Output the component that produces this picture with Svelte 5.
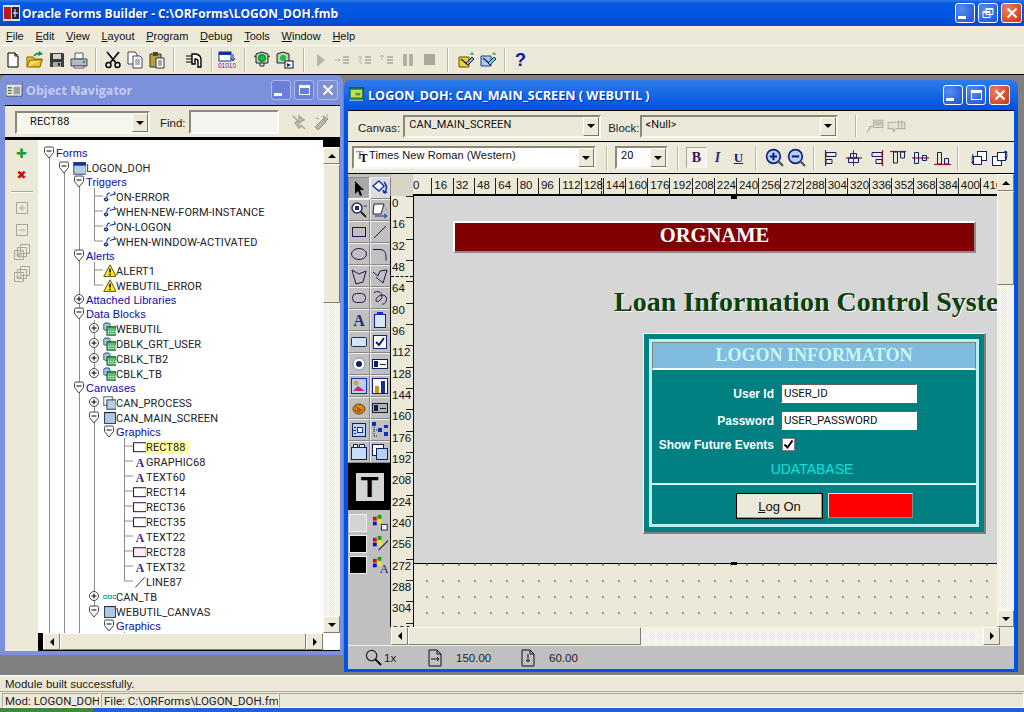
<script>
  const I = {
    new: '<path d="M4 2h7l3 3v11H4z" fill="#fff" stroke="#000"/><path d="M11 2v3h3" fill="none" stroke="#000"/>',
    open: '<path d="M1 6h6l1 2h8l-2 8H1z" fill="#e8c428" stroke="#806000"/><path d="M1 16l3-7h13" fill="#f4dc60" stroke="#806000"/><path d="M8 5q3-4 6-2" stroke="#109030" fill="none" stroke-width="1.6"/><path d="M13 0l4 3-5 2z" fill="#109030"/>',
    save: '<path d="M2 2h13l1 1v13H2z" fill="#3c3c3c"/><rect x="5" y="3" width="8" height="5" fill="#d0d0d0"/><rect x="5" y="11" width="8" height="5" fill="#a8a8a8"/><rect x="10" y="12" width="2" height="3" fill="#333"/>',
    print: '<path d="M5 2h8v6H5z" fill="#fff" stroke="#556"/><path d="M1 8h16v7H1z" fill="#b4b8c0" stroke="#445"/><path d="M4 15h10v2H4z" fill="#fff" stroke="#556"/><rect x="13" y="10" width="2" height="2" fill="#1a9a40"/>',
    cut: '<path d="M3 1l9 11M15 1L6 12" stroke="#000" stroke-width="1.6" fill="none"/><circle cx="4.5" cy="14" r="2.5" fill="none" stroke="#000" stroke-width="1.4"/><circle cx="13.5" cy="14" r="2.5" fill="none" stroke="#000" stroke-width="1.4"/>',
    copy: '<path d="M2 1h7l2 2v10H2z" fill="#fff" stroke="#445"/><path d="M7 5h7l2 2v10H7z" fill="#fff" stroke="#445"/><path d="M9 9h5M9 11h5M9 13h5" stroke="#667" fill="none"/>',
    paste: '<path d="M2 3h11v13H2z" fill="#b8a040" stroke="#333"/><rect x="5" y="1" width="5" height="4" fill="#444"/><path d="M8 7h8v10H8z" fill="#fff" stroke="#333"/><path d="M10 10h4M10 12h4M10 14h4" stroke="#555"/>',
    plug: '<path d="M1 5h6M1 8h6M1 11h6" stroke="#000" fill="none"/><path d="M7 3h4q5 1 5 6v7h-3v-6q0-2-3-2v5H7z" fill="#fff" stroke="#000" stroke-width="1.4"/>',
    gen: '<rect x="1" y="1" width="12" height="9" fill="#fff" stroke="#1030a0"/><rect x="1" y="1" width="12" height="3" fill="#1030a0"/><path d="M15 3v6M13 7l2 3 2-3" stroke="#1030a0" fill="none"/><text x="0" y="17" font-size="6.5" font-family="Liberation Sans" fill="#6018a0">01010</text>',
    run1: '<path d="M2 3l6-2 6 2v9H2z" fill="#b8d0b8" stroke="#223"/><circle cx="8" cy="7" r="3.4" fill="#18c040" stroke="#106020"/><path d="M0 5l2 1M16 5l-2 1M6 12v3h4v-3" stroke="#223" fill="none"/>',
    run2: '<path d="M1 3l6-2 6 2v9H1z" fill="#b8d0b8" stroke="#223"/><circle cx="7" cy="7" r="3" fill="#18c040"/><rect x="9" y="10" width="8" height="7" fill="#fff" stroke="#112"/><path d="M11 12l4 2-4 2z" fill="#102080"/>',
    play: '<path d="M4 3l8 6-8 7z" fill="#b4b4a8"/>',
    s1: '<path d="M1 9h5M4 7l2 2-2 2" stroke="#bcbcb0" fill="none"/><path d="M9 6h6M9 9h6M9 12h6" stroke="#a8a8a0" stroke-width="1.4"/>',
    s2: '<path d="M2 6h4q-2 0-2 3v3h2" stroke="#bcbcb0" fill="none"/><path d="M9 6h6M9 9h6M9 12h6" stroke="#a8a8a0" stroke-width="1.4"/>',
    s3: '<path d="M4 9V4M2 6l2-2 2 2" stroke="#bcbcb0" fill="none"/><path d="M9 6h6M9 9h6M9 12h6" stroke="#a8a8a0" stroke-width="1.4"/>',
    pause: '<path d="M4 3h4v12H4zM10 3h4v12h-4z" fill="#b0b0a4"/>',
    stop: '<path d="M3 3h11v11H3z" fill="#a8a89c"/>',
    wiz1: '<path d="M1 6h10v10H1z" fill="#f0d040" stroke="#605000"/><path d="M3 8l7 6" stroke="#222" stroke-width="1.4"/><path d="M8 12l6-6 2 2-6 6z" fill="#90a0e0" stroke="#223"/><path d="M14 1v3M12 3h4" stroke="#20b040"/>',
    wiz2: '<path d="M1 5h10v10H1z" fill="#a8c8f0" stroke="#204080"/><path d="M3 7l7 6" stroke="#224" stroke-width="1.4"/><path d="M8 12l6-6 2 2-6 6z" fill="#70d0f0" stroke="#223"/><path d="M14 1v3M12 3h4" stroke="#20b040"/>',
    nav: '<rect x="0" y="0" width="17" height="15" fill="#e8e8e0" stroke="#505060"/><rect x="0" y="0" width="17" height="3" fill="#8090c0"/><path d="M2 6h4M2 9h4M2 12h4" stroke="#508050" stroke-width="1.5"/><rect x="8" y="5" width="7" height="8" fill="#9aa0a8"/>',
    cv: '<rect x="0" y="1" width="15" height="12" fill="#2a8a50" stroke="#1a4020"/><rect x="2" y="3" width="12" height="8" fill="#c8e048"/><rect x="7" y="6" width="5" height="3" fill="#48a060"/><path d="M0 14h15" stroke="#80a0d0" stroke-width="2"/>',
    flash1: '<path d="M3 3l5 5-3 2 4 5 3-2 3 3M9 3l5 4-5 3z" stroke="#a8a89c" fill="#c0c0b4" stroke-width="1.5"/>',
    flash2: '<path d="M2 14l8-8 3 3-8 8zM10 3l5 3-3 3z" fill="#b8b8a8" stroke="#9a9a8c"/><path d="M14 1v3M3 5l3 1" stroke="#a8a89c"/>',
    hand1: '<path d="M2 15l3-6h3V3l9 0v7H8" stroke="#b0b0a8" fill="#dad8cc"/><path d="M9 5h7M9 7h7" stroke="#b0b0a8"/>',
    hand2: '<path d="M1 5h5l4 0 7 0v6H9l-3 3v-3H1z" stroke="#b0b0a8" fill="#e4e2d6"/><path d="M11 3v8M14 3v8" stroke="#b0b0a8"/>',
    zin: '<circle cx="8" cy="8" r="6.5" fill="#b8d0f0" stroke="#102080" stroke-width="1.6"/><path d="M4.500 8h7M8 4.500v7" stroke="#102080" stroke-width="2"/><path d="M12.500 12.500l4.500 4.500" stroke="#556" stroke-width="2.2"/>',
    zout: '<circle cx="8" cy="8" r="6.500" fill="#b8d0f0" stroke="#102080" stroke-width="1.6"/><path d="M4.500 8h7" stroke="#102080" stroke-width="2"/><path d="M12.500 12.500l4.500 4.500" stroke="#556" stroke-width="2.200"/>',
    a1: '<path d="M2.500 1v16" stroke="#b01020" stroke-width="1.200"/><path d="M3 3.500h10v4H3zM3 10.500h6v4H3z" fill="none" stroke="#102060"/>',
    a2: '<path d="M1 9h16" stroke="#b01020" stroke-width="1.200"/><path d="M5.500 4.500h6v4.500h-6zM3.500 9h10v4.500h-10z" fill="none" stroke="#102060"/><path d="M8.500 1v16" stroke="#b01020"/>',
    a3: '<path d="M15.500 1v16" stroke="#b01020" stroke-width="1.200"/><path d="M5 3.500h10v4H5zM9 10.500h6v4H9z" fill="none" stroke="#102060"/>',
    a4: '<path d="M1 2.500h16" stroke="#b01020" stroke-width="1.200"/><path d="M4.500 3v11h4V3zM11.500 3v6h4V3z" fill="none" stroke="#102060"/>',
    a5: '<path d="M1 9h17" stroke="#b01020" stroke-width="1.200"/><path d="M3.500 3.500h4v11h-4zM11.500 6.500h4v5h-4z" fill="none" stroke="#102060"/>',
    a6: '<path d="M1 15.500h17" stroke="#b01020" stroke-width="1.200"/><path d="M4.500 3.500h4V15h-4zM11.500 9.500h4V15h-4z" fill="none" stroke="#102060"/>',
    st1: '<rect x="7.500" y="2.500" width="9" height="9" fill="#fff" stroke="#102060"/><path d="M3 5q-2 5 0 10M3 15l-2-2M3 15l2-2" stroke="#1030a0" fill="none"/><rect x="3.500" y="7.500" width="8" height="8" fill="#fff" stroke="#102060"/>',
    st2: '<rect x="1.500" y="7.500" width="9" height="9" fill="#fff" stroke="#102060"/><rect x="6.500" y="3.500" width="8" height="8" fill="#fff" stroke="#102060"/><path d="M15 2q2 4 0 9M15 2l-2 1M15 2l1 2" stroke="#1030a0" fill="none"/>',
    arrow: '<path d="M5 2v13l3-3 2 5 2-1-2-5h4z" fill="#000"/>',
    rot: '<path d="M2 7l6-5 5 5-5 5z" fill="#fff" stroke="#1030b0" stroke-width="1.400"/><path d="M13 3q5 6 0 11M13 14l3-1M13 14l-1-3" stroke="#1030b0" fill="none" stroke-width="1.500"/>',
    mag: '<circle cx="7" cy="7" r="5" fill="#fff" stroke="#334" stroke-width="1.500"/><rect x="5" y="5" width="4" height="4" fill="#1030a0"/><path d="M11 11l5 5" stroke="#222" stroke-width="2"/><path d="M14 5h3" stroke="#334"/>',
    resh: '<path d="M3 3h10l-3 10H2z" fill="#fff" stroke="#223"/><path d="M13 3l3 7" stroke="#888" stroke-dasharray="1 1"/><path d="M4 15h12M13 13l3 2-3 2" stroke="#1030b0" fill="none"/>',
    rect: '<rect x="2.500" y="4.500" width="13" height="9" fill="none" stroke="#301050"/>',
    line: '<path d="M3 15L15 3" stroke="#301050"/>',
    ell: '<ellipse cx="9" cy="9" rx="7.500" ry="5.500" fill="none" stroke="#301050"/>',
    arc: '<path d="M2 4.500h7q6 0 6 7v4" fill="none" stroke="#301050"/>',
    poly: '<path d="M2 3l7 4 7-3-3 11-7 2z" fill="none" stroke="#301050"/>',
    pline: '<path d="M2 5l5 4 2-5 7-1-4 13-7-6" fill="none" stroke="#301050"/>',
    rrect: '<rect x="2.500" y="4.500" width="13" height="9" rx="4" fill="none" stroke="#301050"/>',
    free: '<path d="M3 4c3-3 8-1 8 3s-6 8-6 4 8-7 10-3-2 8-4 7" fill="none" stroke="#301050"/>',
    a: '<text x="9" y="15" text-anchor="middle" font-family="Liberation Serif" font-weight="700" font-size="16" fill="#203080">A</text>',
    blk: '<rect x="3.500" y="3.500" width="11" height="13" fill="#d8e8f8" stroke="#102080"/><rect x="6" y="1" width="6" height="3" fill="#1030c0"/>',
    btn: '<rect x="1.500" y="4.500" width="15" height="9" rx="1" fill="#d8e4f8" stroke="#223060"/>',
    chk: '<rect x="2.500" y="2.500" width="13" height="13" fill="#fff" stroke="#102080"/><path d="M5 9l3 3 5-7" fill="none" stroke="#102060" stroke-width="2"/>',
    radio: '<circle cx="9" cy="9" r="6" fill="#fff" stroke="#8090a0"/><circle cx="9" cy="9" r="3" fill="#102060"/>',
    txt: '<rect x="1.500" y="4.500" width="15" height="9" fill="#fff" stroke="#102060"/><rect x="3" y="6" width="4" height="6" fill="#102060"/><path d="M9 9.500h6" stroke="#102060"/>',
    img: '<rect x="1.500" y="1.500" width="15" height="15" fill="#b8d0f8" stroke="#1030a0"/><circle cx="6" cy="6" r="2.500" fill="#e0a020"/><path d="M3 14l5-5 7 5z" fill="#c03070"/>',
    chart: '<rect x="1.500" y="1.500" width="15" height="15" fill="#fff" stroke="#102080"/><rect x="4" y="9" width="4" height="7" fill="#d09020"/><rect x="10" y="4" width="4" height="12" fill="#1030a0"/>',
    ole: '<ellipse cx="9" cy="10" rx="6" ry="5" fill="#d08820" stroke="#804000"/><path d="M6 8l6 4M5 11l5 2" stroke="#703000"/>',
    disp: '<rect x="1.500" y="4.500" width="15" height="9" fill="#b0b0b0" stroke="#102040"/><rect x="3" y="6" width="4" height="6" fill="#102040"/><path d="M9 9.500h6" stroke="#102040"/>',
    stk: '<rect x="2.500" y="2.500" width="13" height="13" fill="#b8d4f0" stroke="#102060"/><rect x="7.500" y="6.500" width="5" height="5" fill="#fff" stroke="#1030a0"/><path d="M4 6.500h2M3 9.500h3M4 12.500h2" stroke="#1030a0"/>',
    tr: '<rect x="1" y="1" width="4" height="4" fill="#1030c0"/><rect x="7" y="7" width="4" height="4" fill="#1030c0"/><rect x="13" y="4" width="4" height="3" fill="#1030c0"/><rect x="13" y="11" width="4" height="4" fill="#1030c0"/><path d="M3 6v10M3 9h4M3 15h3" stroke="#223" stroke-dasharray="1 1"/>',
    tab: '<rect x="1.500" y="4.500" width="15" height="12" fill="#c8dcf4" stroke="#102060"/><path d="M3.500 1.500h4v3h-4zM9.500 1.500h5v3h-5z" fill="#fff" stroke="#102060"/>',
    can: '<rect x="1.500" y="1.500" width="11" height="11" fill="#fff" stroke="#102060"/><rect x="5.500" y="5.500" width="11" height="11" fill="#b8d0f0" stroke="#102060"/>',
    c1: '<rect x="1" y="3" width="4" height="4" fill="#d01010"/><rect x="6" y="1" width="4" height="4" fill="#10a010"/><rect x="1" y="8" width="4" height="4" fill="#1010d0"/><rect x="6" y="6" width="4" height="4" fill="#e8e820"/><rect x="10" y="11" width="6" height="6" fill="#fff" stroke="#301050"/>',
    c2: '<rect x="1" y="3" width="4" height="4" fill="#d01010"/><rect x="6" y="1" width="4" height="4" fill="#10a010"/><rect x="1" y="8" width="4" height="4" fill="#1010d0"/><rect x="6" y="6" width="5" height="5" fill="#e8e820"/><path d="M7 16L17 6" stroke="#301050" stroke-width="1.200"/>',
    c3: '<rect x="1" y="3" width="4" height="4" fill="#d01010"/><rect x="6" y="1" width="4" height="4" fill="#10a010"/><rect x="1" y="8" width="4" height="4" fill="#1010d0"/><rect x="6" y="6" width="4" height="4" fill="#e8e820"/><text x="13" y="18" text-anchor="middle" font-family="Liberation Serif" font-size="13" fill="#301070">A</text>',
    find: '<circle cx="7" cy="7" r="5.500" fill="none" stroke="#222" stroke-width="1.300"/><path d="M11 11l6 6" stroke="#111" stroke-width="2.200"/>',
    pr: '<path d="M3 1h8l4 4v12H3z" fill="none" stroke="#111"/><path d="M11 1v4h4" fill="none" stroke="#111"/><path d="M5 10h8M11 8l2 2-2 2" fill="none" stroke="#111"/>',
    pd: '<path d="M3 1h8l4 4v12H3z" fill="none" stroke="#111"/><path d="M11 1v4h4" fill="none" stroke="#111"/><path d="M9 5v8M7 11l2 2 2-2" fill="none" stroke="#111"/>',
    trig: '<circle cx="4" cy="12" r="2.800" fill="#1030a0"/><circle cx="4" cy="12" r="1" fill="#fff"/><path d="M5 9q0-5 4-5" stroke="#1030a0" fill="none" stroke-width="1.300"/><path d="M9 7q4-2 7-2M14 2l2 3-3 1" stroke="#1030a0" fill="none" stroke-width="1.300"/>',
    alert: '<path d="M9 1l8 15H1z" fill="#f8e818" stroke="#303000"/><path d="M9 6v5" stroke="#000" stroke-width="2"/><rect x="8" y="12.500" width="2" height="2"/>',
    dblk: '<ellipse cx="5" cy="3" rx="4" ry="2" fill="#78a8d0" stroke="#204070"/><path d="M1 3v7q4 2 8 0V3" fill="#a8c8e8" stroke="#204070"/><rect x="5" y="6" width="12" height="11" fill="#20a040" stroke="#105020"/><path d="M7 10v6M10 10v6M13 10v6M16 10v6M6 9h10M6 12h10M6 15h10" stroke="#fff" stroke-width=".7"/>',
    cnv: '<rect x="1" y="1" width="11" height="11" fill="#fff" stroke="#506070" stroke-width="1.300"/><rect x="5" y="5" width="12" height="12" fill="#b8cce4" stroke="#304050" stroke-width="1.300"/>',
    cnv2: '<rect x="2" y="2" width="14" height="14" fill="#b0c8e8" stroke="#304050" stroke-width="1.300"/><path d="M2 2h14" stroke="#102040"/>',
    mod: '<rect x="1" y="2" width="16" height="15" fill="#b4cce8" stroke="#102050"/><rect x="1" y="2" width="16" height="4" fill="#1030a0"/>',
    trect: '<rect x="0.700" y="3.500" width="16.500" height="11.500" fill="none" stroke="#301050" stroke-width="1.300"/>',
    trectp: '<rect x="0.700" y="3.500" width="16.500" height="11.500" fill="#fbeaf4" stroke="#301050" stroke-width="1.300"/>',
    ta: '<text x="9" y="15" text-anchor="middle" font-family="Liberation Serif" font-weight="700" font-size="15" fill="#402080">A</text>',
    tline: '<path d="M3 16L15 3" stroke="#301050" stroke-width="1.200"/>',
    chain: '<path d="M1 7h4v4H1zM7 7h4v4H7zM13 7h4v4h-4z" fill="none" stroke="#20a0a0" stroke-width="1.200"/>',
    ttf: '<text x="1" y="11" font-family="Liberation Serif" font-weight="700" font-size="15" fill="#909090">T</text><text x="6" y="16" font-family="Liberation Serif" font-weight="700" font-size="15" fill="#000">T</text>'
  };

  const tools = [
    { w: 22, i: 'new' }, { w: 22, i: 'open' }, { w: 22, i: 'save' }, { w: 22, i: 'print' }, { w: 12 },
    { w: 22, i: 'cut' }, { w: 22, i: 'copy' }, { w: 22, i: 'paste' }, { w: 12 },
    { w: 28, i: 'plug' }, { w: 8 }, { w: 22, i: 'gen' }, { w: 14 },
    { w: 22, i: 'run1' }, { w: 22, i: 'run2' }, { w: 15 },
    { w: 21.6, i: 'play' }, { w: 21.6, i: 's1' }, { w: 21.6, i: 's2' }, { w: 21.6, i: 's3' }, { w: 21.6, i: 'pause' }, { w: 21.6, i: 'stop' }, { w: 15 },
    { w: 22, i: 'wiz1' }, { w: 22, i: 'wiz2' }, { w: 10 }, { w: 22, q: true }
  ];

  const menus = [['F', 'ile'], ['E', 'dit'], ['V', 'iew'], ['L', 'ayout'], ['P', 'rogram'], ['D', 'ebug'], ['T', 'ools'], ['W', 'indow'], ['H', 'elp']];

  const tree = [
    [0, 'm', '', 'Forms', 1], [1, 'm', 'mod', 'LOGON_DOH', 0], [2, 'm', '', 'Triggers', 1],
    [3, '', 'trig', 'ON-ERROR', 0], [3, '', 'trig', 'WHEN-NEW-FORM-INSTANCE', 0], [3, '', 'trig', 'ON-LOGON', 0], [3, '', 'trig', 'WHEN-WINDOW-ACTIVATED', 0],
    [2, 'm', '', 'Alerts', 1], [3, '', 'alert', 'ALERT1', 0], [3, '', 'alert', 'WEBUTIL_ERROR', 0],
    [2, 'p', '', 'Attached Libraries', 1], [2, 'm', '', 'Data Blocks', 1],
    [3, 'p', 'dblk', 'WEBUTIL', 0], [3, 'p', 'dblk', 'DBLK_GRT_USER', 0], [3, 'p', 'dblk', 'CBLK_TB2', 0], [3, 'p', 'dblk', 'CBLK_TB', 0],
    [2, 'm', '', 'Canvases', 1], [3, 'p', 'cnv', 'CAN_PROCESS', 0], [3, 'm', 'cnv2', 'CAN_MAIN_SCREEN', 0], [4, 'm', '', 'Graphics', 1],
    [5, '', 'trect', 'RECT88', 2], [5, '', 'ta', 'GRAPHIC68', 0], [5, '', 'ta', 'TEXT60', 0], [5, '', 'trect', 'RECT14', 0], [5, '', 'trect', 'RECT36', 0], [5, '', 'trect', 'RECT35', 0],
    [5, '', 'ta', 'TEXT22', 0], [5, '', 'trectp', 'RECT28', 0], [5, '', 'ta', 'TEXT32', 0], [5, '', 'tline', 'LINE87', 0],
    [3, 'p', 'chain', 'CAN_TB', 0], [3, 'm', 'cnv2', 'WEBUTIL_CANVAS', 0], [4, 'm', '', 'Graphics', 1]
  ];

  const palette = ['arrow', 'rot', 'mag', 'resh', 'rect', 'line', 'ell', 'arc', 'poly', 'pline', 'rrect', 'free', 'a', 'blk', 'btn', 'chk', 'radio', 'txt', 'img', 'chart', 'ole', 'disp', 'stk', 'tr', 'tab', 'can'];
  const hticks = Array.from({ length: 29 }, (_, i) => i * 16);
  const vticks = Array.from({ length: 21 }, (_, i) => i * 16);
</script>

{#snippet icon(name, size = 18)}
  <svg class="ic" width={size} height={size} viewBox="0 0 18 18">{@html I[name]}</svg>
{/snippet}

{#snippet down()}
  <span class="drop"><span class="tri-d"></span></span>
{/snippet}

{#snippet winbtns(kind, off)}
  <div class="wbtns">
    <span class="wb" class:off><span class="min"></span></span>
    <span class="wb" class:off>
      {#if kind === 'restore'}
        <svg width="14" height="14" viewBox="0 0 14 14"><path d="M5 2.500h7v6H5zM5 3.500h7" fill="none" stroke="#fff"/><path d="M2 5.500h7v6H2zM2 6.500h7" fill="none" stroke="#fff"/></svg>
      {:else}
        <span class="max"></span>
      {/if}
    </span>
    <span class="wb close" class:off>
      <svg width="12" height="12" viewBox="0 0 12 12"><path d="M1.500 1.500l9 9M10.500 1.500l-9 9" stroke="#fff" stroke-width="2"/></svg>
    </span>
  </div>
{/snippet}

<div class="screen">
  <header class="apptitle">
    <svg class="appicon" width="17" height="16" viewBox="0 0 17 16"><rect width="17" height="16" fill="#e8e0d0"/><rect x="1" y="2" width="7" height="12" fill="#c01818"/><rect x="9" y="2" width="7" height="12" fill="#202040"/><path d="M12 4v8M10 8h5" stroke="#fff"/></svg>
    <span class="ttext">Oracle Forms Builder - C:\ORForms\LOGON_DOH.fmb</span>
    {@render winbtns('restore', false)}
  </header>

  <nav class="menubar">
    {#each menus as m}
      <span class="menu"><u>{m[0]}</u>{m[1]}</span>
    {/each}
  </nav>

  <div class="toolbar">
    {#each tools as t}
      <span class="tool" style="width:{t.w}px">
        {#if t.i}{@render icon(t.i)}{:else if t.q}<span class="help">?</span>{:else}<span class="vsep"></span>{/if}
      </span>
    {/each}
  </div>

  <main class="mdi">
    <section class="win nav">
      <div class="wtitle navtitle">
        <span class="wicon">{@render icon('nav', 17)}</span>
        <span class="wtext inactive">Object Navigator</span>
        {@render winbtns('max', true)}
      </div>
      <div class="navbar">
        <div class="combo navcombo"><span class="ctext">RECT88</span>{@render down()}</div>
        <span class="lbl findl">Find:</span>
        <div class="findbox"></div>
        <span class="navicons">{@render icon('flash1', 18)}{@render icon('flash2', 18)}</span>
      </div>
      <div class="navbody">
        <aside class="side">
          <span class="plus">✚</span>
          <span class="cross">✖</span>
          <hr />
          <svg class="ic" width="18" height="18" viewBox="0 0 18 18"><rect x="3.500" y="3.500" width="11" height="11" fill="none" stroke="#a8a89c"/><path d="M6 9h6M9 6v6" stroke="#a8a89c"/></svg>
          <svg class="ic" width="18" height="18" viewBox="0 0 18 18"><rect x="3.500" y="3.500" width="11" height="11" fill="none" stroke="#a8a89c"/><path d="M6 9h6" stroke="#a8a89c"/></svg>
          <svg class="ic" width="18" height="18" viewBox="0 0 18 18"><path d="M7.500 1.500h9v9h-9zM4.500 4.500h9v9h-9zM1.500 7.500h9v9h-9z" fill="#ece9d8" stroke="#a8a89c"/><path d="M3 12h6M6 9v6" stroke="#a8a89c"/></svg>
          <svg class="ic" width="18" height="18" viewBox="0 0 18 18"><path d="M7.500 1.500h9v9h-9zM4.500 4.500h9v9h-9zM1.500 7.500h9v9h-9z" fill="#ece9d8" stroke="#a8a89c"/><path d="M3 12h6" stroke="#a8a89c"/></svg>
        </aside>
        <div class="treewrap">
          <div class="treepane">
            <svg class="guides" width="285" height="493" viewBox="0 0 285 493" fill="none" stroke="#8c8c8c">
              <path d="M11.500 12v481M26.500 27v466M41.500 41v452" />
              <path d="M56.500 41v60M56.500 56h9M56.500 71h9M56.500 86h9M56.500 101h9" />
              <path d="M56.500 115v30M56.500 130h9M56.500 145h9" />
              <path d="M56.500 173v60M56.500 262v209" />
              <path d="M86.500 291v150M86.500 306h9M86.500 321h9M86.500 336h9M86.500 351h9M86.500 366h9M86.500 381h9M86.500 396h9M86.500 411h9M86.500 426h9M86.500 441h9M86.500 485v8" />
            </svg>
            {#each tree as r}
              <div class="row" class:cat={r[4] === 1} style="padding-left:{5 + 15 * r[0]}px">
                <span class="exp">
                  {#if r[1] === 'm'}
                    <svg width="12" height="14" viewBox="0 0 12 14"><path d="M1.500 2.500q0-1.500 1.500-1.500h6q1.500 0 1.500 1.500v4L6 12 1.500 6.500z" fill="#fff" stroke="#444"/><path d="M3.500 5h5" stroke="#000"/></svg>
                  {:else if r[1] === 'p'}
                    <svg width="12" height="14" viewBox="0 0 12 14"><circle cx="6" cy="6" r="4.500" fill="#fff" stroke="#444"/><path d="M3.500 6h5M6 3.500v5" stroke="#000"/></svg>
                  {/if}
                </span>
                {#if r[2]}<span class="ticon">{@render icon(r[2], 14)}</span>{/if}
                <span class="rtext" class:blue={r[4] === 1} class:sel={r[4] === 2}>{r[3]}</span>
              </div>
            {/each}
          </div>
          <div class="vs navvs">
            <span class="sb"><span class="tri-u"></span></span>
            <span class="thumb navthumb"></span>
            <span class="track"></span>
            <span class="sb"><span class="tri-d"></span></span>
          </div>
          <div class="hs navhs">
            <span class="sb"><span class="tri-l"></span></span>
            <span class="thumb grow"></span>
            <span class="sb"><span class="tri-r"></span></span>
          </div>
          <div class="corner"></div>
        </div>
      </div>
    </section>

    <section class="win cwin">
      <div class="wtitle ctitle">
        <span class="wicon">{@render icon('cv', 17)}</span>
        <span class="wtext">LOGON_DOH: CAN_MAIN_SCREEN ( WEBUTIL )</span>
        {@render winbtns('max', false)}
      </div>
      <div class="cbar1">
        <span class="lbl canl">Canvas:</span>
        <div class="combo canc"><span class="ctext">CAN_MAIN_SCREEN</span>{@render down()}</div>
        <span class="lbl blkl">Block:</span>
        <div class="combo canc"><span class="ctext">&lt;Null&gt;</span>{@render down()}</div>
        <span class="vsep sp1"></span>
        {@render icon('hand1', 19)}
        <span class="i2">{@render icon('hand2', 19)}</span>
      </div>
      <div class="cbar2">
        <div class="combo fontc white">
          <span class="tt">{@render icon('ttf', 14)}</span>
          <span class="ctext fname">Times New Roman (Western)</span>{@render down()}
        </div>
        <span class="vsep s2a"></span>
        <div class="combo sizec white"><span class="ctext">20</span>{@render down()}</div>
        <span class="vsep s2b"></span>
        <span class="fb bold">B</span>
        <span class="fb ital">I</span>
        <span class="fb und">U</span>
        <span class="vsep s2c"></span>
        <span class="zi">{@render icon('zin', 19)}</span>
        <span class="zi z2">{@render icon('zout', 19)}</span>
        <span class="vsep s2d"></span>
        <span class="al">{@render icon('a1')}</span>
        <span class="al">{@render icon('a2')}</span>
        <span class="al">{@render icon('a3')}</span>
        <span class="al">{@render icon('a4')}</span>
        <span class="al">{@render icon('a5')}</span>
        <span class="al">{@render icon('a6')}</span>
        <span class="vsep s2e"></span>
        <span class="zi">{@render icon('st1', 18)}</span>
        <span class="zi z3">{@render icon('st2', 18)}</span>
      </div>
      <div class="cmain">
        <aside class="palette">
          <div class="pgrid">
            {#each palette as p, i}
              <span class="pbtn" class:pressed={i === 0} class:hot={i === 1}>{@render icon(p, 18)}</span>
            {/each}
          </div>
          <div class="tsample"><span class="tbox">T</span></div>
          <div class="colors">
            <span class="sw light"></span><span class="cic">{@render icon('c1', 17)}</span>
            <span class="sw"></span><span class="cic">{@render icon('c2', 17)}</span>
            <span class="sw"></span><span class="cic">{@render icon('c3', 17)}</span>
          </div>
        </aside>
        <div class="work">
          <div class="rcorner"></div>
          <div class="hruler">
            <div class="hinner">
              {#each hticks as t}<span class="hcell">{t}</span>{/each}
            </div>
            <span class="hmark"></span>
          </div>
          <div class="vs cvs">
            <span class="sb"><span class="tri-u"></span></span>
            <span class="thumb cthumb"></span>
            <span class="track"></span>
            <span class="sb"><span class="tri-d"></span></span>
          </div>
          <div class="vruler">
            {#each vticks as t}<span class="vcell">{t}</span>{/each}
            <span class="vmark"></span>
          </div>
          <div class="canvas">
            <div class="formarea">
              <div class="org">ORGNAME</div>
              <div class="loan">Loan Information Control System</div>
              <div class="logon">
                <div class="ring">
                  <div class="lhead">LOGON INFORMATON</div>
                  <div class="lbody">
                    <label class="flabel" for="uid">User Id</label>
                    <input id="uid" class="fin" value="USER_ID" readonly />
                    <label class="flabel" for="pwd">Password</label>
                    <input id="pwd" class="fin" value="USER_PASSWORD" readonly />
                    <span class="flabel chkl">Show Future Events</span>
                    <span class="cbox"><svg width="11" height="11" viewBox="0 0 11 11"><path d="M1.500 5.500l3 3 5-7" fill="none" stroke="#000" stroke-width="2"/></svg></span>
                    <span class="udb">UDATABASE</span>
                  </div>
                  <div class="lfoot">
                    <button class="logbtn"><u>L</u>og On</button>
                    <span class="redbox"></span>
                  </div>
                </div>
              </div>
              <span class="handle ht"></span>
              <span class="handle hb"></span>
            </div>
            <div class="dots"></div>
          </div>
          <div class="hs chs">
            <span class="sb"><span class="tri-l"></span></span>
            <span class="thumb cth"></span>
            <span class="track"></span>
            <span class="sb"><span class="tri-r"></span></span>
            <span class="chcorner"></span>
          </div>
        </div>
      </div>
      <div class="cstatus">
        <span class="st1">{@render icon('find', 17)}<span class="st">1x</span></span>
        <span class="st2">{@render icon('pr', 18)}<span class="st val">150.00</span></span>
        <span class="st3">{@render icon('pd', 18)}<span class="st val">60.00</span></span>
      </div>
    </section>
  </main>

  <footer class="status">
    <div class="msg">Module built successfully.</div>
    <div class="panels">
      <span class="panel p1">Mod: LOGON_DOH</span>
      <span class="panel p2">File: C:\ORForms\LOGON_DOH.fmb</span>
      <span class="panel p3"></span>
    </div>
  </footer>
  <div class="taskbar"><span class="startb"></span></div>
</div>

<style>
  :global(body) { margin: 0; background: #808080; }
  .screen {
    width: 1024px; height: 712px; overflow: hidden; display: flex; flex-direction: column;
    font-family: "Liberation Sans", Arial, sans-serif; font-size: 11px; color: #000; background: #ece9d8;
  }
  .ic { display: block; flex: none; }

  .apptitle {
    height: 26px; flex: none; display: flex; align-items: center; padding-left: 3px; box-sizing: border-box;
    background: linear-gradient(#2f7ce8 0, #0a5ae0 12%, #0054e3 60%, #0048cc 100%);
  }
  .appicon { flex: none; }
  .ttext { margin-left: 2px; color: #fff; font: 700 12px "Open Sans", sans-serif; white-space: nowrap; text-shadow: 1px 1px 0 #0030a0; }
  .wbtns { margin-left: auto; display: flex; gap: 3px; padding-right: 2px; }
  .wb {
    width: 20px; height: 20px; box-sizing: border-box; border: 1px solid #fff; border-radius: 3px;
    background: radial-gradient(circle at 30% 30%, #5a8cf0, #1a50d8); display: flex; align-items: center; justify-content: center; position: relative;
  }
  .wb.close { background: radial-gradient(circle at 30% 30%, #f08060, #c83010); width: 21px; }
  .wb.off { background: #6a80d8; border-color: #a8b8f0; }
  .wb.close.off { background: #8090d0; }
  .min { width: 8px; height: 3px; background: #fff; align-self: flex-end; margin: 0 6px 3px 0; }
  .max { width: 11px; height: 10px; box-sizing: border-box; border: 1px solid #fff; border-top-width: 3px; }

  .menubar { height: 19px; flex: none; display: flex; align-items: center; padding-left: 6px; background: #ece9d8; font-size: 11px; border-bottom: 1px solid #fff; }
  .menu { margin-right: 11.700px; white-space: nowrap; color: #111; }
  .toolbar { height: 28px; flex: none; display: flex; align-items: center; padding-left: 2px; background: #ece9d8; border-bottom: 1px solid #000; }
  .tool { height: 24px; display: flex; justify-content: center; align-items: center; flex: none; }
  .vsep { display: block; width: 0; height: 24px; border-left: 1px solid #bdb9a6; border-right: 1px solid #fff; flex: none; }
  .help { font: 700 18px "Liberation Sans", sans-serif; color: #0a1aa0; }

  .mdi { position: relative; height: 600px; flex: none; background: #808080; }
  .win { position: absolute; box-sizing: border-box; display: flex; flex-direction: column; border-radius: 7px 7px 0 0; }
  .nav { left: 0; top: 0; width: 343px; height: 580px; background: #7c90dc; padding: 0 3px 4px 5px; }
  .cwin { left: 344px; top: 5px; width: 674px; height: 592px; background: #0a44d8; padding: 0 4px 3px 4px; background-image: linear-gradient(#2f7ce8 0, #0054e3 28px); }
  .wtitle { flex: none; display: flex; align-items: center; }
  .navtitle { height: 30px; margin-left: -3px; padding-left: 4px; }
  .ctitle { height: 30px; margin-left: -1px; padding-left: 2px; padding-right: 2px; }
  .wicon { width: 18px; flex: none; }
  .wtext { margin-left: 1px; color: #fff; font: 700 12.600px "Open Sans", sans-serif; white-space: nowrap; text-shadow: 1px 1px 0 #0030a0; }
  .wtext.inactive { color: #c4cdf0; text-shadow: none; margin-left: 2px; font-size: 12.500px; }
  .navtitle .wbtns { padding-right: 2px; }

  .navbar { height: 31px; flex: none; display: flex; align-items: center; padding-left: 10px; background: #ece9d8; border-top: 1px solid #000; border-bottom: 3px solid #000; box-sizing: content-box; }
  .combo { height: 23px; box-sizing: border-box; display: flex; align-items: flex-start; position: relative; border: 2px solid; border-color: #8c8878 #f8f8f0 #f8f8f0 #8c8878; flex: none; background: #ece9d8; }
  .combo.white { background: #fff; }
  .ctext { padding: 1px 0 0 4px; font: 11px "Roboto", sans-serif; letter-spacing: 0.1px; white-space: nowrap; color: #111; }
  .navcombo { width: 135px; background: #f6f5ee; margin-top: 2px; }
  .navcombo .ctext { padding: 2px 0 0 13px; }
  .drop { margin-left: auto; width: 16px; height: 19px; box-sizing: border-box; background: #ece9d8; border: 1px solid; border-color: #fff #7c7868 #7c7868 #fff; display: flex; align-items: center; justify-content: center; }
  .tri-d { width: 0; height: 0; border: 4px solid transparent; border-top-color: #000; border-bottom: 0; }
  .tri-u { width: 0; height: 0; border: 4px solid transparent; border-bottom-color: #000; border-top: 0; }
  .tri-l { width: 0; height: 0; border: 4px solid transparent; border-right-color: #000; border-left: 0; }
  .tri-r { width: 0; height: 0; border: 4px solid transparent; border-left-color: #000; border-right: 0; }
  .lbl { font-size: 11.500px; color: #222; white-space: nowrap; }
  .findl { margin-left: 10px; margin-top: 2px; }
  .findbox { margin-left: 3px; width: 90px; height: 24px; box-sizing: border-box; background: #f4f4ee; border: 2px solid; border-color: #8c8878 #fff #fff #8c8878; }
  .navicons { display: flex; gap: 5px; margin-left: 11px; }

  .navbody { flex: 1; min-height: 0; display: flex; }
  .side { width: 33px; flex: none; background: #ece9d8; display: flex; flex-direction: column; align-items: center; box-sizing: border-box; padding-top: 4px; height: 100%; }
  .plus { color: #10a030; font-size: 13px; line-height: 20px; font-family: "DejaVu Sans", sans-serif; }
  .cross { color: #c01010; font-size: 12px; line-height: 22px; font-family: "DejaVu Sans", sans-serif; }
  .side hr { width: 22px; margin: 5px 0 6px; border: 0; border-top: 1px solid #aca899; border-bottom: 1px solid #fff; }
  .side .ic { margin-bottom: 4px; }

  .treewrap { flex: 1; display: grid; grid-template-columns: 285px 17px; grid-template-rows: 493px 17px; background: #000; }
  .treepane { position: relative; background: #fff; overflow: hidden; padding-top: 5.500px; }
  .guides { position: absolute; left: 0; top: 0; }
  .row { position: relative; height: 15px; display: flex; align-items: center; box-sizing: border-box; white-space: nowrap; }
  .row.cat { margin-top: -1px; }
  .row:first-of-type { margin-top: 0; }
  .exp { width: 12px; height: 14px; flex: none; display: block; background: transparent; }
  .exp svg { display: block; }
  .ticon { margin-left: 3px; width: 13px; flex: none; background: #fff; }
  .rtext { padding-left: 0; font: 11px "Roboto", sans-serif; letter-spacing: 0.1px; color: #222; background: #fff; }
  .rtext.blue { color: #0a0aa8; margin-left: 1px; font: 11px "Liberation Sans", sans-serif; }
  .rtext.sel { background: #ffff9c; padding-right: 4px; }

  .vs { display: flex; flex-direction: column; background: #ece9d8; }
  .hs { display: flex; background: #ece9d8; }
  .navvs { margin-top: 7px; height: 486px; }
  .sb { flex: none; width: 17px; height: 17px; box-sizing: border-box; background: #ece9d8; border: 1px solid; border-color: #fff #808070 #808070 #fff; display: flex; align-items: center; justify-content: center; }
  .thumb { flex: none; box-sizing: border-box; background: #ece9d8; border: 1px solid; border-color: #fff #808070 #808070 #fff; }
  .track { flex: 1; background: repeating-conic-gradient(#ece9d8 0 25%, #fff 0 50%) 0 0 / 2px 2px; }
  .navthumb { height: 139px; }
  .navhs { margin-left: 5px; }
  .grow { flex: 1; }
  .corner { background: #fff; }

  .cbar1 { height: 30px; flex: none; display: flex; align-items: center; background: #ece9d8; border-top: 1px solid #000; border-bottom: 1px solid #000; padding-left: 10px; }
  .canc { width: 198px; }
  .canl { margin-top: 3px; margin-right: 3px; }
  .blkl { margin: 3px 0 0 7px; }
  .sp1 { margin: 0 8px 0 17px; height: 22px; }
  .i2 { margin-left: 3px; }
  .cbar2 { height: 31px; flex: none; display: flex; align-items: center; background: #ece9d8; border-bottom: 1px solid #000; padding-left: 4px; }
  .fontc { width: 244px; }
  .sizec { width: 53px; }
  .tt { width: 14px; margin: 2px 0 0 1px; flex: none; }
  .fname { padding-left: 0; font: 11px "Liberation Sans", sans-serif; }
  .s2a { margin: 0 7px 0 10px; height: 24px; }
  .s2b { margin: 0 7px 0 9px; height: 24px; }
  .fb { width: 21px; height: 21px; display: flex; align-items: center; justify-content: center; font: 700 14px "Liberation Serif", serif; color: #401060; }
  .bold { box-sizing: border-box; border: 1px solid; border-color: #a8a494 #fff #fff #a8a494; background: #f4f2e8; }
  .ital { font-style: italic; color: #203080; }
  .und { text-decoration: underline; color: #102090; font-size: 13px; }
  .s2c { margin: 0 8px 0 6px; height: 24px; }
  .zi { flex: none; }
  .z2 { margin-left: 3px; }
  .s2d { margin: 0 6px 0 7px; height: 24px; }
  .al { width: 22px; flex: none; display: flex; justify-content: center; }
  .s2e { margin: 0 11px 0 4px; height: 24px; }
  .z3 { margin-left: 3px; }

  .cmain { flex: 1; min-height: 0; display: flex; }
  .palette { width: 43px; flex: none; background: #c0c0c0; display: flex; flex-direction: column; padding-top: 3px; box-sizing: border-box; }
  .pgrid { display: grid; grid-template-columns: 21.500px 21.500px; grid-auto-rows: 22px; }
  .pbtn { display: flex; align-items: center; justify-content: center; box-sizing: border-box; background: #c0c0c0; border: 1px solid; border-color: #eee #888 #888 #eee; }
  .pbtn.pressed { background: #a8a8a8; border-color: #888 #fff #fff #888; }
  .pbtn.hot { background: #dcdcdc; }
  .tsample { height: 47px; background: #000; display: flex; align-items: center; justify-content: center; }
  .tbox { width: 28px; height: 28px; background: #d4d4d4; display: flex; align-items: center; justify-content: center; font: 700 29px/28px "Liberation Sans", sans-serif; color: #000; }
  .colors { display: grid; grid-template-columns: 22px 21px; grid-auto-rows: 21px; padding-top: 4px; }
  .sw { width: 18px; height: 18px; margin-left: 1px; box-sizing: border-box; background: #000; border: 1px solid #eee; }
  .sw.light { background: #d4d4d4; }
  .cic { display: flex; justify-content: center; }

  .work { flex: 1; min-width: 0; display: grid; grid-template-columns: 22px 584px 17px; grid-template-rows: 22px 431px 18px; background: #ece9d8; }
  .rcorner { background: #d8d5c8; }
  .hruler { position: relative; overflow: hidden; border-bottom: 2px solid #000; box-sizing: border-box; }
  .hinner { display: flex; margin-left: -3px; height: 100%; padding-top: 4px; box-sizing: border-box; }
  .hcell { flex: 0 0 21.333px; box-sizing: border-box; border-left: 1px solid #222; padding: 0 0 0 2px; font-size: 11.500px; line-height: 14px; white-space: nowrap; color: #111; }
  .hmark { position: absolute; left: 188px; top: 4px; height: 16px; width: 0; border-left: 1px dashed #000; }
  .cvs { grid-row: 1 / span 2; grid-column: 3; }
  .cthumb { height: 94px; }
  .vruler { position: relative; overflow: hidden; border-left: 1px solid #000; margin-left: -1px; }
  .vcell { position: relative; display: block; height: 21.333px; box-sizing: border-box; padding: 0 0 0 1px; font-size: 11.500px; line-height: 15px; white-space: nowrap; color: #111; }
  .vcell::before { content: ""; position: absolute; right: 0; top: 0; width: 7px; border-top: 1px solid #222; }
  .vmark { position: absolute; left: 0; top: 80px; width: 22px; border-top: 1px dashed #000; }
  .canvas { position: relative; overflow: hidden; border-left: 1px solid #000; box-sizing: border-box; background: #ece9d8; display: flex; flex-direction: column; }
  .formarea { height: 368px; flex: none; position: relative; background: #d6d6d6; border-bottom: 1px solid #000; box-sizing: border-box; }
  .org { position: absolute; left: 39px; top: 25px; width: 523px; height: 32px; box-sizing: border-box; background: #800000; border: 2px solid; border-color: #fff #8c8c8c #8c8c8c #fff; color: #fff; font: 700 20.500px/24px "Liberation Serif", serif; text-align: center; }
  .loan { position: absolute; left: 200px; top: 89px; color: #0a400a; font: 700 28px/34px "Liberation Serif", serif; white-space: nowrap; text-shadow: 1px 1px 0 #fff; }
  .logon { position: absolute; left: 229px; top: 137px; width: 343px; height: 201px; box-sizing: border-box; background: #008080; border: 1px solid; border-color: #e8ffff #808080 #808080 #e8ffff; border-width: 1px 2px 2px 1px; padding: 5px; }
  .ring { box-sizing: border-box; height: 100%; border: 3px solid #b8f0f0; display: flex; flex-direction: column; background: #008080; }
  .lhead { height: 28px; flex: none; box-sizing: border-box; background: #80bce0; border: 1px solid #808080; border-bottom: 2px solid #fff; color: #c8f8f0; font: 700 18px/25px "Liberation Serif", serif; text-align: center; }
  .lbody { display: grid; grid-template-columns: 122px 136px; column-gap: 7px; grid-template-rows: 19px 19px 13px 20px; row-gap: 8px; padding-top: 14px; height: 115px; box-sizing: border-box; flex: none; border-bottom: 2px solid #dff; }
  .flabel { justify-self: end; align-self: center; color: #fff; font: 700 12px "Liberation Sans", sans-serif; white-space: nowrap; }
  .fin { box-sizing: border-box; width: 136px; height: 19px; margin: 0; padding: 0 2px 2px; border: 1px solid; border-color: #606060 #fff #fff #606060; background: #fff; color: #111; font: 11.500px "Roboto", sans-serif; outline: none; }
  .cbox { width: 13px; height: 13px; box-sizing: border-box; background: #fff; border: 1px solid #808080; margin-left: 1px; display: flex; align-items: center; justify-content: center; }
  .udb { grid-column: 1 / span 2; justify-self: center; color: #10e0e0; font-size: 14px; line-height: 20px; padding-left: 55px; }
  .lfoot { flex: 1; display: flex; align-items: flex-start; padding: 8px 0 0 84px; }
  .logbtn { width: 87px; height: 26px; margin: 0; padding: 0; background: #ece9d8; border: 1px solid #000; box-shadow: inset -1px -1px 0 #999; color: #111; font: 13px "Liberation Sans", sans-serif; }
  .redbox { margin-left: 5px; width: 85px; height: 25px; box-sizing: border-box; background: #ff0000; border: 1px solid; border-color: #ddd #888 #888 #ddd; }
  .handle { position: absolute; left: 317px; width: 6px; height: 3px; background: #000; }
  .ht { top: 0; }
  .hb { bottom: -2px; }
  .dots { flex: 1; background-color: #ece9d8; background-image: radial-gradient(circle at 1px 1px, #9a9a90 0.7px, transparent 1px); background-size: 16px 16px; background-position: 12px 16px; }
  .chs { grid-column: 1 / span 3; }
  .chs .sb { height: 18px; }
  .cth { width: 233px; }
  .chcorner { width: 14px; flex: none; background: #ece9d8; }

  .cstatus { height: 24px; flex: none; background: #c0c0c0; display: flex; align-items: center; color: #222; font-size: 11.500px; border-top: 1px solid #eee; box-sizing: border-box; }
  .cstatus > span { display: flex; align-items: center; flex: none; }
  .st1 { margin-left: 17px; width: 61px; }
  .st2 { width: 93px; }
  .st3 { width: 70px; }
  .st { margin-left: 2px; }
  .val { margin-left: 12px; }

  .status { height: 33px; flex: none; background: #ece9d8; border-top: 1px solid #fff; box-sizing: border-box; }
  .msg { height: 15px; padding-left: 5px; font-size: 11.500px; line-height: 16px; color: #222; border-bottom: 1px solid #aca899; }
  .panels { display: flex; height: 15px; margin-top: 1px; font: 11.500px/14px "Roboto", sans-serif; color: #222; }
  .panel { box-sizing: border-box; border: 1px solid; border-color: #aca899 #fff #fff #aca899; padding-left: 2px; white-space: nowrap; overflow: hidden; }
  .p1 { width: 98px; margin-left: 2px; }
  .p2 { width: 178px; margin-left: 1px; }
  .p3 { flex: 1; }
  .taskbar { height: 4px; flex: none; background: #245edb; }
  .startb { display: block; width: 93px; height: 4px; background: #3c8a3c; }
</style>
